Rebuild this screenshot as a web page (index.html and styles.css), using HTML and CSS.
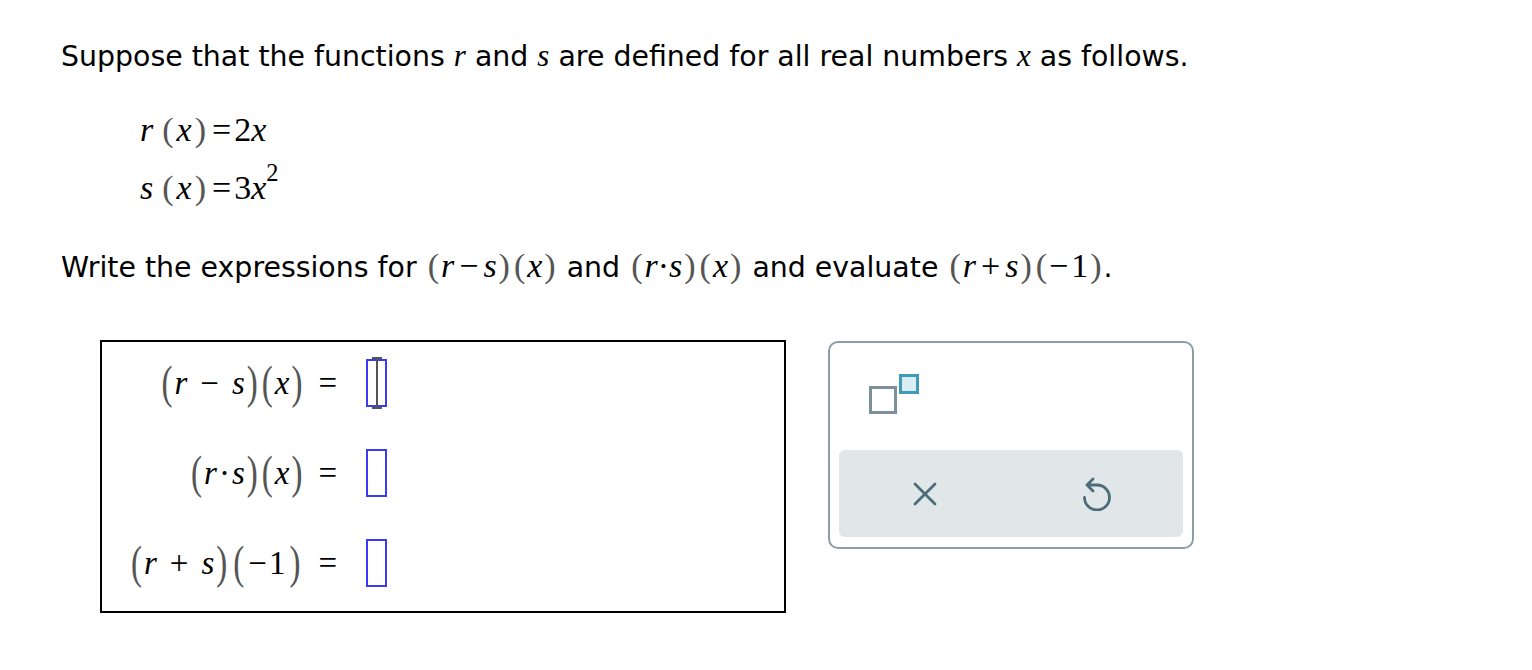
FILE: index.html
```html
<!DOCTYPE html>
<html lang="en">
<head>
<meta charset="utf-8">
<title>Function operations</title>
<link rel="stylesheet" href="styles.css">
</head>
<body>
<div class="page">
  <p class="intro">Suppose that the functions <i class="mv">r</i> and <i class="mv">s</i> are defined for all real numbers <i class="mv">x</i> as follows.</p>
  <div class="defs">
    <div class="def"><i class="fn">r</i><span class="pr">(</span><i>x</i><span class="pr">)</span><span class="op">=</span>2<i>x</i></div>
    <div class="def"><i class="fn">s</i><span class="pr">(</span><i>x</i><span class="pr">)</span><span class="op">=</span>3<i>x</i><sup>2</sup></div>
  </div>
  <p class="task">Write the expressions for <span class="mi"><span class="pr">(</span><i>r</i><span class="bop">−</span><i>s</i><span class="pr">)</span><span class="pr">(</span><i>x</i><span class="pr">)</span></span> and <span class="mi"><span class="pr">(</span><i>r</i>·<i>s</i><span class="pr">)</span><span class="pr">(</span><i>x</i><span class="pr">)</span></span> and evaluate <span class="mi"><span class="pr">(</span><i>r</i><span class="bop">+</span><i>s</i><span class="pr">)</span><span class="pr">(</span><span class="neg">−</span>1<span class="pr">)</span></span>.</p>

  <div class="work">
    <div class="answers">
      <div class="expr"><span class="bp">(</span><i>r</i><span class="bo">−</span><i>s</i><span class="bp">)</span><span class="bp">(</span><i>x</i><span class="bp">)</span><span class="eq">=</span></div>
      <div class="slot active"><span class="caret"></span></div>
      <div class="expr"><span class="bp">(</span><i>r</i><span class="dot">·</span><i>s</i><span class="bp">)</span><span class="bp">(</span><i>x</i><span class="bp">)</span><span class="eq">=</span></div>
      <div class="slot"></div>
      <div class="expr"><span class="bp">(</span><i>r</i><span class="bo">+</span><i>s</i><span class="bp">)</span><span class="bp wide">(</span><span class="neg">−</span>1<span class="bp wide">)</span><span class="eq">=</span></div>
      <div class="slot"></div>
    </div>

    <div class="pad">
      <div class="pad-top">
        <button class="sup-btn" aria-label="Superscript">
          <span class="sq-base"></span><span class="sq-exp"></span>
        </button>
      </div>
      <div class="pad-bar">
        <button class="tool" aria-label="Clear">
          <svg width="24" height="24" viewBox="0 0 24 24"><path d="M2 2 L22 22 M22 2 L2 22" fill="none" stroke="#4b6c79" stroke-width="2.8" stroke-linecap="round"/></svg>
        </button>
        <button class="tool" aria-label="Undo">
          <svg width="30" height="34" viewBox="0 0 30 34"><path d="M15 8 A12.5 12.5 0 1 1 2.5 20.5 M15 8 H5 M11 2 L5 8 L11 14" fill="none" stroke="#4b6c79" stroke-width="2.8" stroke-linecap="round" stroke-linejoin="round"/></svg>
        </button>
      </div>
    </div>
  </div>
</div>
</body>
</html>
```

FILE: styles.css
```css
* { box-sizing: border-box; }
html, body { margin: 0; padding: 0; background: #fff; }
body {
  font-family: "DejaVu Sans", Verdana, sans-serif;
  color: #000;
}
.page {
  padding: 41px 0 0 61px;
}
.intro, .task {
  margin: 0;
  font-size: 28.4px;
  line-height: 32px;
  height: 32px;
  white-space: nowrap;
}
.mv, .mi, .def {
  font-family: "Liberation Serif", "Times New Roman", serif;
}
i { font-style: italic; }
.mv { font-size: 31px; line-height: 0; }
.mi { font-size: 34px; line-height: 0; }
.pr { color: #555; margin: 0 2px; }
.bop { margin: 0 5px; }
.neg { margin-right: 3px; }

.defs {
  margin: 37px 0 0 79px;
  display: flex;
  flex-direction: column;
  gap: 18px;
}
.def {
  font-size: 34px;
  line-height: 40px;
  height: 40px;
  white-space: nowrap;
}
.def .fn { margin-right: 6px; }
.def .pr { margin: 0 3px; }
.def .op { margin: 0 3px; }
.def sup { font-size: 0.72em; line-height: 0; vertical-align: 0.72em; margin-left: 0; }

.task { margin-top: 44px; }

.work {
  margin: 56px 0 0 39px;
  display: flex;
  align-items: flex-start;
}
.answers {
  width: 686px;
  height: 273px;
  border: 2px solid #000;
  padding: 17px 0 0 0;
  display: grid;
  grid-template-columns: 235px 21px;
  column-gap: 29px;
  row-gap: 42px;
  grid-auto-rows: 48px;
  align-content: start;
}
.expr {
  font-family: "Liberation Serif", "Times New Roman", serif;
  font-size: 33px;
  text-align: right;
  white-space: nowrap;
  line-height: 48px;
}
.bp {
  display: inline-block;
  color: #555;
  transform: scaleY(1.4);
  margin: 0 2px;
}
.bp.wide { margin: 0 4px; }
.bo { margin: 0 13px; }
.dot { margin: 0 2px; }
.expr .neg { margin-right: 2px; }
.eq { margin-left: 14px; }
.slot {
  width: 21px;
  height: 48px;
  border: 2px solid #3b3bf5;
  position: relative;
}
.slot.active .caret {
  position: absolute;
  left: 8px;
  top: -4px;
  width: 2px;
  height: 52px;
  background: #555;
}
.slot.active .caret::before,
.slot.active .caret::after {
  content: "";
  position: absolute;
  left: -4px;
  width: 10px;
  height: 2px;
  background: #555;
}
.slot.active .caret::before { top: 0; }
.slot.active .caret::after { bottom: 0; }

.pad {
  margin-left: 42px;
  width: 366px;
  height: 208px;
  margin-top: 1px;
  border: 2px solid #8c9ea6;
  border-radius: 10px;
  display: flex;
  flex-direction: column;
}
.pad-top {
  padding: 31px 0 0 39px;
}
.sup-btn {
  display: block;
  position: relative;
  width: 50px;
  height: 40px;
  border: 0;
  padding: 0;
  background: none;
}
.sq-base {
  position: absolute;
  left: 0;
  top: 12px;
  width: 28px;
  height: 28px;
  border: 3px solid #7b9099;
  background: #fff;
}
.sq-exp {
  position: absolute;
  left: 30px;
  top: 0;
  width: 20px;
  height: 20px;
  border: 3px solid #429bb6;
  background: #d6eef4;
}
.pad-bar {
  margin: auto 9px 10px 9px;
  height: 87px;
  background: #e1e6e9;
  border-radius: 6px;
  display: flex;
}
.tool {
  flex: 1;
  border: 0;
  background: none;
  padding: 0;
  display: flex;
  align-items: center;
  justify-content: center;
}
```
